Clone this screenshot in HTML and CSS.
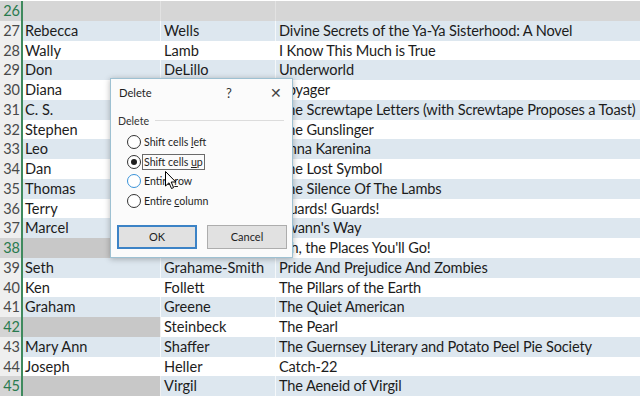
FILE: index.html
```html
<!DOCTYPE html>
<html>
<head>
<meta charset="utf-8">
<link rel="stylesheet" href="styles.css">
</head>
<body>
<div class="sheet">
  <div class="row sel band-gray"><div class="hd">26</div><div class="c a"></div><div class="c b"></div><div class="c cc"></div></div>
  <div class="row odd"><div class="hd">27</div><div class="c a">Rebecca</div><div class="c b">Wells</div><div class="c cc">Divine Secrets of the Ya-Ya Sisterhood: A Novel</div></div>
  <div class="row"><div class="hd">28</div><div class="c a">Wally</div><div class="c b">Lamb</div><div class="c cc">I Know This Much is True</div></div>
  <div class="row odd"><div class="hd">29</div><div class="c a">Don</div><div class="c b">DeLillo</div><div class="c cc">Underworld</div></div>
  <div class="row"><div class="hd">30</div><div class="c a">Diana</div><div class="c b">Gabaldon</div><div class="c cc">Voyager</div></div>
  <div class="row odd"><div class="hd">31</div><div class="c a">C. S.</div><div class="c b">Lewis</div><div class="c cc">The Screwtape Letters (with Screwtape Proposes a Toast)</div></div>
  <div class="row"><div class="hd">32</div><div class="c a">Stephen</div><div class="c b">King</div><div class="c cc">The Gunslinger</div></div>
  <div class="row odd"><div class="hd">33</div><div class="c a">Leo</div><div class="c b">Tolstoy</div><div class="c cc">Anna Karenina</div></div>
  <div class="row"><div class="hd">34</div><div class="c a">Dan</div><div class="c b">Brown</div><div class="c cc">The Lost Symbol</div></div>
  <div class="row odd"><div class="hd">35</div><div class="c a">Thomas</div><div class="c b">Harris</div><div class="c cc">The Silence Of The Lambs</div></div>
  <div class="row"><div class="hd">36</div><div class="c a">Terry</div><div class="c b">Pratchett</div><div class="c cc">Guards! Guards!</div></div>
  <div class="row odd"><div class="hd">37</div><div class="c a">Marcel</div><div class="c b">Proust</div><div class="c cc">Swann's Way</div></div>
  <div class="row sel"><div class="hd">38</div><div class="c a empty"></div><div class="c b">Seuss</div><div class="c cc">Oh, the Places You'll Go!</div></div>
  <div class="row odd"><div class="hd">39</div><div class="c a">Seth</div><div class="c b">Grahame-Smith</div><div class="c cc">Pride And Prejudice And Zombies</div></div>
  <div class="row"><div class="hd">40</div><div class="c a">Ken</div><div class="c b">Follett</div><div class="c cc">The Pillars of the Earth</div></div>
  <div class="row odd"><div class="hd">41</div><div class="c a">Graham</div><div class="c b">Greene</div><div class="c cc">The Quiet American</div></div>
  <div class="row sel"><div class="hd">42</div><div class="c a empty"></div><div class="c b">Steinbeck</div><div class="c cc">The Pearl</div></div>
  <div class="row odd"><div class="hd">43</div><div class="c a">Mary Ann</div><div class="c b">Shaffer</div><div class="c cc">The Guernsey Literary and Potato Peel Pie Society</div></div>
  <div class="row"><div class="hd">44</div><div class="c a">Joseph</div><div class="c b">Heller</div><div class="c cc">Catch-22</div></div>
  <div class="row odd sel"><div class="hd">45</div><div class="c a empty"></div><div class="c b">Virgil</div><div class="c cc">The Aeneid of Virgil</div></div>
</div>

<div class="dialog">
  <div class="titlebar">
    <span class="title">Delete</span>
    <span class="help">?</span>
    <span class="close">✕</span>
  </div>
  <div class="group">
    <span class="glabel">Delete</span>
    <span class="gline"></span>
  </div>
  <div class="options">
    <div class="opt"><span class="radio"></span><span class="lbl">Shift cells <u>l</u>eft</span></div>
    <div class="opt"><span class="radio on"></span><span class="lbl focus">Shift cells <u>u</u>p</span></div>
    <div class="opt"><span class="radio hover"></span><span class="lbl">Entire <u>r</u>ow</span></div>
    <div class="opt"><span class="radio"></span><span class="lbl">Entire <u>c</u>olumn</span></div>
  </div>
  <div class="buttons">
    <div class="btn ok">OK</div>
    <div class="btn">Cancel</div>
  </div>
</div>

<svg class="cursor" width="12" height="19" viewBox="0 0 12 19">
  <path d="M0.5 0.5 L0.5 15 L4 11.8 L6.5 17.5 L8.6 16.6 L6.2 11 L10.8 11 Z" fill="#fff" stroke="#000" stroke-width="1" stroke-linejoin="round"/>
</svg>
</body>
</html>
```

FILE: styles.css
```css
html, body {
  margin: 0;
  padding: 0;
}
body {
  width: 640px;
  height: 398px;
  overflow: hidden;
  background: #ffffff;
  font-family: "Lato", "Liberation Sans", sans-serif;
  position: relative;
}
.sheet {
  padding-top: 1px;
  background: #fff;
}
.row {
  display: grid;
  grid-template-columns: 23px 138px 115px 1fr;
  height: 19.75px;
  background: #ffffff;
}
.row.odd {
  background: #dde7ef;
}
.hd {
  background: #efefef;
  border-right: 2px solid #3f8a5e;
  color: #4a4a4a;
  font-size: 14.5px;
  text-align: right;
  padding-right: 1px;
  line-height: 19.75px;
}
.row.sel .hd {
  background: #d4d4d4;
  color: #2a7a4e;
}
.c {
  font-size: 14.6px;
  color: #1c1c1c;
  line-height: 19.75px;
  white-space: nowrap;
  overflow: hidden;
  border-right: 1px solid rgba(255,255,255,0.7);
}
.c.a { padding-left: 2px; }
.c.b { padding-left: 3px; }
.c.cc { padding-left: 3px; border-right: none; letter-spacing: -0.15px; }
.band-gray .c { background: #d6d6d6; border-right-color: #e2e2e2; }
.c.empty { background: #c8c8c8; }

.dialog {
  position: absolute;
  left: 110px;
  top: 78px;
  width: 181px;
  height: 178px;
  background: #fbfbfb;
  border: 1px solid #9ec1d2;
  box-shadow: 0 1px 6px rgba(0,0,0,0.28);
  font-family: "Lato", "Liberation Sans", sans-serif;
  font-size: 10.6px;
  color: #1e1e1e;
  display: flex;
  flex-direction: column;
}
.titlebar {
  display: flex;
  align-items: center;
  height: 27px;
  padding: 0 0 0 8px;
}
.title { font-size: 11.2px; flex: 1; }
.help { font-size: 13px; color: #333; width: 44px; }
.close { font-size: 14px; color: #444; width: 22px; }
.group {
  display: flex;
  align-items: center;
  padding: 7px 8px 0 7px;
  height: 16px;
}
.glabel { color: #333; }
.gline {
  flex: 1;
  height: 1px;
  background: #dcdcdc;
  margin-left: 6px;
  margin-top: -2px;
}
.options {
  display: flex;
  flex-direction: column;
  padding: 3px 0 0 16px;
}
.opt {
  display: flex;
  align-items: center;
  height: 19.7px;
}
.radio {
  width: 12px;
  height: 12px;
  border: 1px solid #333;
  border-radius: 50%;
  background: #fff;
  margin-right: 1px;
  position: relative;
  box-sizing: content-box;
}
.radio.on::after {
  content: "";
  position: absolute;
  left: 3px;
  top: 3px;
  width: 6px;
  height: 6px;
  border-radius: 50%;
  background: #1e1e1e;
}
.radio.hover { border-color: #3a93d8; }
.lbl { padding: 1px 1px; border: 1px solid transparent; }
.lbl.focus { border-color: #6a6a6a; }
.buttons {
  display: flex;
  gap: 10px;
  padding: 14px 0 0 6px;
}
.btn {
  width: 78px;
  height: 22px;
  background: #e1e1e1;
  border: 1px solid #adadad;
  text-align: center;
  line-height: 22px;
  font-size: 11px;
}
.btn.ok {
  border: 2px solid #3c83c6;
  width: 76px;
  height: 20px;
  line-height: 20px;
}
.cursor {
  position: absolute;
  left: 165px;
  top: 171px;
}
```
